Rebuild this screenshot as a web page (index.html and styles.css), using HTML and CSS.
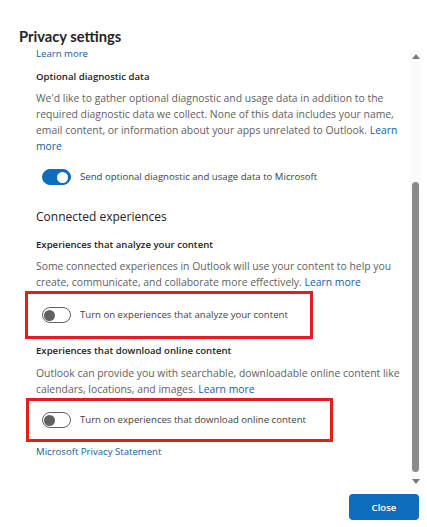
FILE: index.html
```html
<!DOCTYPE html>
<html>
<head>
<meta charset="utf-8">
<link rel="stylesheet" href="styles.css">
</head>
<body>
<div class="dialog">
  <h1 class="title">Privacy settings</h1>
  <div class="scroll">
    <div class="content">
      <a class="link top-link">Learn more</a>
      <h3 class="sub first-sub">Optional diagnostic data</h3>
      <p class="body">We'd like to gather optional diagnostic and usage data in addition to the<br>required diagnostic data we collect. None of this data includes your name,<br>email content, or information about your apps unrelated to Outlook. <a class="link">Learn<br>more</a></p>
      <div class="toggle-row on-row">
        <span class="switch on"><span class="knob"></span></span>
        <span class="label">Send optional diagnostic and usage data to Microsoft</span>
      </div>
      <h2 class="section">Connected experiences</h2>
      <h3 class="sub">Experiences that analyze your content</h3>
      <p class="body">Some connected experiences in Outlook will use your content to help you<br>create, communicate, and collaborate more effectively. <a class="link">Learn more</a></p>
      <div class="toggle-row boxed box1">
        <span class="switch"><span class="knob"></span></span>
        <span class="label">Turn on experiences that analyze your content</span>
      </div>
      <h3 class="sub">Experiences that download online content</h3>
      <p class="body body-last">Outlook can provide you with searchable, downloadable online content like<br>calendars, locations, and images. <a class="link">Learn more</a></p>
      <div class="toggle-row boxed box2">
        <span class="switch"><span class="knob"></span></span>
        <span class="label">Turn on experiences that download online content</span>
      </div>
      <a class="link statement">Microsoft Privacy Statement</a>
    </div>
    <div class="scrollbar">
      <span class="arrow up"></span>
      <div class="track"><div class="thumb"></div></div>
      <span class="arrow down"></span>
    </div>
  </div>
  <div class="footer">
    <button class="close">Close</button>
  </div>
</div>
</body>
</html>
```
FILE: styles.css
```css
* { box-sizing: border-box; }
html, body { margin: 0; padding: 0; background: #fff; }
body {
  font-family: "Open Sans", "Noto Sans", sans-serif;
  color: #242424;
  width: 427px;
  height: 527px;
  overflow: hidden;
}
.dialog {
  padding: 26px 8px 0 19px;
  display: flex;
  flex-direction: column;
}
.title {
  margin: 0;
  font-family: Lato, "Open Sans", sans-serif;
  font-size: 14.7px;
  font-weight: 700;
  line-height: 20px;
  color: #242424;
}
.scroll {
  display: flex;
  height: 440px;
}
.content {
  flex: 1;
  min-width: 0;
  padding-left: 17px;
  padding-right: 4px;
}
.link { color: #115ea3; text-decoration: none; }
.top-link { display: block; font-size: 9.6px; line-height: 16px; }
.sub {
  margin: 0;
  font-size: 9.6px;
  font-weight: 600;
  line-height: 16px;
  color: #242424;
}
.first-sub { margin-top: 7px; }
.body {
  margin: 5px 0 0;
  font-size: 10.4px;
  line-height: 16px;
  color: #616161;
  white-space: nowrap;
}
.body-last { margin-top: 6px; }
.toggle-row {
  display: flex;
  align-items: center;
  gap: 9px;
  padding-left: 6px;
}
.on-row { margin-top: 15px; height: 16px; }
.label { font-size: 9.6px; color: #424242; line-height: 16px; }
.switch {
  width: 29px;
  height: 16px;
  border-radius: 8px;
  border: 1px solid #616161;
  display: flex;
  align-items: center;
  padding: 0 1px;
  flex: none;
}
.switch .knob {
  width: 11px; height: 11px; border-radius: 50%; background: #616161;
}
.switch.on { background: #0f6cbd; border-color: #0f6cbd; justify-content: flex-end; padding: 0 2px; }
.switch.on .knob { background: #fff; }
.section {
  margin: 22px 0 0;
  font-size: 12px;
  font-weight: 400;
  line-height: 20px;
  color: #242424;
}
.section + .sub { margin-top: 10px; }
.boxed {
  border: 3px solid #e31c1c;
  margin-left: -11px;
  padding-left: 14px;
  margin-top: 1px;
}
.box1 { width: 288px; height: 48px; }
.box2 { width: 307px; height: 44px; margin-left: -10px; padding-left: 13px; }
.boxed + .sub { margin-top: 4px; }
.statement { display: block; font-size: 9.6px; line-height: 16px; margin-top: 2px; }
.scrollbar {
  width: 11px;
  margin-right: -2px;
  display: flex;
  flex-direction: column;
  align-items: center;
  background: #fafafa;
  margin-top: 4px;
  height: 437px;
  flex: none;
}
.arrow { width: 0; height: 0; border-left: 4px solid transparent; border-right: 4px solid transparent; flex: none; }
.arrow.up { border-bottom: 5px solid #7a7a7a; margin-top: 4px; }
.arrow.down { border-top: 5px solid #7a7a7a; margin-bottom: 3px; }
.track { flex: 1; width: 100%; display: flex; flex-direction: column; justify-content: flex-end; padding: 3px 0 7px; }
.thumb { height: 290px; background: #8a8a8a; border-radius: 4px; width: 7px; margin: 0 auto; }
.footer {
  display: flex;
  justify-content: flex-end;
  margin-top: 8px;
}
.close {
  width: 70px;
  height: 26px;
  background: #0f6cbd;
  color: #fff;
  border: none;
  border-radius: 4px;
  font-family: inherit;
  font-size: 9.6px;
  font-weight: 600;
}
```
